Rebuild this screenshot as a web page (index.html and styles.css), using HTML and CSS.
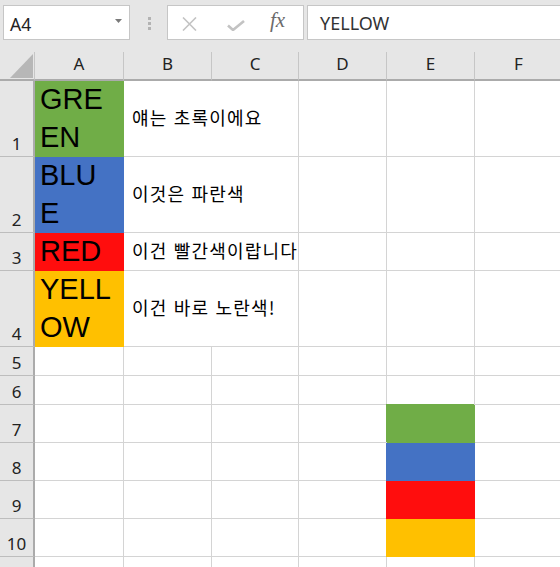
FILE: index.html
```html
<!DOCTYPE html>
<html lang="ko">
<head>
<meta charset="utf-8">
<title>Sheet</title>
<link rel="stylesheet" href="styles.css">
</head>
<body>
<div class="toolbar">
  <div class="namebox">
    <span class="ref">A4</span>
    <svg class="caret" width="7" height="4" viewBox="0 0 7 4"><path d="M0 0H7L3.5 4Z" fill="#7a7a7a"/></svg>
  </div>
  <div class="grip"><i></i><i></i><i></i></div>
  <div class="fxbox">
    <svg class="ico-x" width="15" height="14" viewBox="0 0 15 14"><path d="M1 0.5L14 13.5M14 0.5L1 13.5" stroke="#c3c3c3" stroke-width="1.6" fill="none"/></svg>
    <svg class="ico-ok" width="18" height="11" viewBox="0 0 18 11"><path d="M1 5.5L6 10L17 1" stroke="#c3c3c3" stroke-width="2.6" fill="none"/></svg>
    <span class="fx">fx</span>
  </div>
  <div class="formula">YELLOW</div>
</div>

<div class="sheet">
  <div class="corner"><svg width="23" height="24" viewBox="0 0 23 24"><path d="M23 0V24H0Z" fill="#b7b7b7"/></svg></div>
  <div class="colhead">A</div>
  <div class="colhead">B</div>
  <div class="colhead">C</div>
  <div class="colhead">D</div>
  <div class="colhead">E</div>
  <div class="colhead">F</div>
  <div class="colhead"></div>

  <div class="rowhead">1</div>
  <div class="cell big green"><div class="wrap">GREEN</div></div>
  <div class="cell kr span2">얘는 초록이에요</div>
  <div class="cell"></div><div class="cell"></div><div class="cell"></div><div class="cell"></div>

  <div class="rowhead">2</div>
  <div class="cell big blue"><div class="wrap">BLUE</div></div>
  <div class="cell kr span2">이것은 파란색</div>
  <div class="cell"></div><div class="cell"></div><div class="cell"></div><div class="cell"></div>

  <div class="rowhead">3</div>
  <div class="cell big red"><div class="wrap">RED</div></div>
  <div class="cell kr span2">이건 빨간색이랍니다</div>
  <div class="cell"></div><div class="cell"></div><div class="cell"></div><div class="cell"></div>

  <div class="rowhead">4</div>
  <div class="cell big yellow"><div class="wrap">YELLOW</div></div>
  <div class="cell kr span2">이건 바로 노란색!</div>
  <div class="cell"></div><div class="cell"></div><div class="cell"></div><div class="cell"></div>

  <div class="rowhead">5</div>
  <div class="cell"></div><div class="cell"></div><div class="cell"></div><div class="cell"></div><div class="cell"></div><div class="cell"></div><div class="cell"></div>

  <div class="rowhead">6</div>
  <div class="cell"></div><div class="cell"></div><div class="cell"></div><div class="cell"></div><div class="cell"></div><div class="cell"></div><div class="cell"></div>

  <div class="rowhead">7</div>
  <div class="cell"></div><div class="cell"></div><div class="cell"></div><div class="cell"></div><div class="cell green edge"></div><div class="cell"></div><div class="cell"></div>

  <div class="rowhead">8</div>
  <div class="cell"></div><div class="cell"></div><div class="cell"></div><div class="cell"></div><div class="cell blue edge"></div><div class="cell"></div><div class="cell"></div>

  <div class="rowhead">9</div>
  <div class="cell"></div><div class="cell"></div><div class="cell"></div><div class="cell"></div><div class="cell red edge"></div><div class="cell"></div><div class="cell"></div>

  <div class="rowhead">10</div>
  <div class="cell"></div><div class="cell"></div><div class="cell"></div><div class="cell"></div><div class="cell yellow edge"></div><div class="cell"></div><div class="cell"></div>

  <div class="rowhead">11</div>
  <div class="cell"></div><div class="cell"></div><div class="cell"></div><div class="cell"></div><div class="cell"></div><div class="cell"></div><div class="cell"></div>
</div>
</body>
</html>
```
FILE: styles.css
```css
html, body {
  margin: 0;
  padding: 0;
}
body {
  width: 560px;
  height: 567px;
  overflow: hidden;
  background: #e6e6e6;
  font-family: "Noto Sans", "Open Sans", sans-serif;
  color: #222;
}

/* ---------- toolbar ---------- */
.toolbar {
  height: 52px;
  box-sizing: border-box;
  padding: 5px 0 0 3px;
  display: flex;
  align-items: flex-start;
  width: 600px;
}
.namebox {
  width: 127px;
  height: 35px;
  box-sizing: border-box;
  border: 1px solid #c6c6c6;
  background: #fff;
  display: flex;
  align-items: center;
  padding: 4px 7px 0 6px;
}
.ref {
  font-size: 17.5px;
  line-height: 23px;
  color: #222;
}
.caret {
  margin-left: auto;
  margin-top: -7px;
}
.grip {
  display: flex;
  flex-direction: column;
  gap: 2px;
  margin: 12px 0 0 18px;
}
.grip i {
  display: block;
  width: 3px;
  height: 3px;
  background: #b3b3b3;
}
.fxbox {
  width: 137px;
  height: 35px;
  box-sizing: border-box;
  border: 1px solid #c6c6c6;
  background: #fff;
  margin-left: 16px;
  display: flex;
  align-items: flex-start;
}
.ico-x {
  margin: 11px 0 0 14px;
}
.ico-ok {
  margin: 14px 0 0 30px;
}
.fx {
  margin: 2px 0 0 25px;
  font-family: "Liberation Serif", "DejaVu Serif", serif;
  font-style: italic;
  font-size: 21px;
  line-height: 24px;
  color: #6b6b6b;
}
.formula {
  flex: 1;
  height: 35px;
  box-sizing: border-box;
  border: 1px solid #c6c6c6;
  background: #fff;
  margin-left: 3px;
  padding: 5px 0 0 12px;
  font-size: 18px;
  line-height: 24px;
  color: #333;
}

/* ---------- sheet ---------- */
.sheet {
  width: 640px;
  display: grid;
  grid-template-columns: 35px 89px 88px 87px 88px 88px 88px 1fr;
  grid-template-rows: 29px 76px 76px 38px 76px 29px 29px 38px 38px 38px 38px 29px;
  background: #fff;
}
.corner {
  background: #e6e6e6;
  border-right: 1px solid #c6c6c6;
  border-bottom: 2px solid #ababab;
  display: flex;
  justify-content: flex-end;
  align-items: flex-end;
  padding: 0 1px 1px 0;
}
.colhead {
  background: #e6e6e6;
  border-right: 1px solid #c6c6c6;
  border-bottom: 2px solid #ababab;
  display: flex;
  align-items: center;
  justify-content: center;
  padding-bottom: 3px;
  font-size: 17px;
  line-height: 20px;
}
.rowhead {
  background: #e6e6e6;
  border-right: 2px solid #ababab;
  border-bottom: 1px solid #bdbdbd;
  display: flex;
  align-items: flex-end;
  justify-content: center;
  padding-bottom: 2px;
  font-size: 17px;
  line-height: 20px;
}
.corner, .colhead, .rowhead, .cell {
  box-sizing: border-box;
}
.cell {
  border-right: 1px solid #d4d4d4;
  border-bottom: 1px solid #d4d4d4;
  color: #000;
}
.span2 {
  grid-column: span 2;
}
.big {
  display: flex;
  align-items: flex-end;
  padding-left: 5px;
  font-family: "Liberation Sans", Arial, sans-serif;
  font-size: 29px;
  line-height: 38px;
}
.wrap {
  width: 73px;
  word-break: break-all;
}
.kr {
  display: flex;
  align-items: center;
  padding: 0 0 4px 8px;
  white-space: nowrap;
  font-family: "Noto Sans CJK KR", "Noto Sans", sans-serif;
  font-size: 18px;
  letter-spacing: 1.2px;
}

/* fills hide gridlines */
.green  { background: #70ad47; border-color: transparent; }
.blue   { background: #4472c4; border-color: transparent; }
.red    { background: #ff0d0d; border-color: transparent; }
.yellow { background: #ffc000; border-color: transparent; }
.edge.green  { box-shadow: -1px -1px 0 0 #70ad47; }
.edge.blue   { box-shadow: -1px 0 0 0 #4472c4; }
.edge.red    { box-shadow: -1px 0 0 0 #ff0d0d; }
.edge.yellow { box-shadow: -1px 0 0 0 #ffc000; }
```
